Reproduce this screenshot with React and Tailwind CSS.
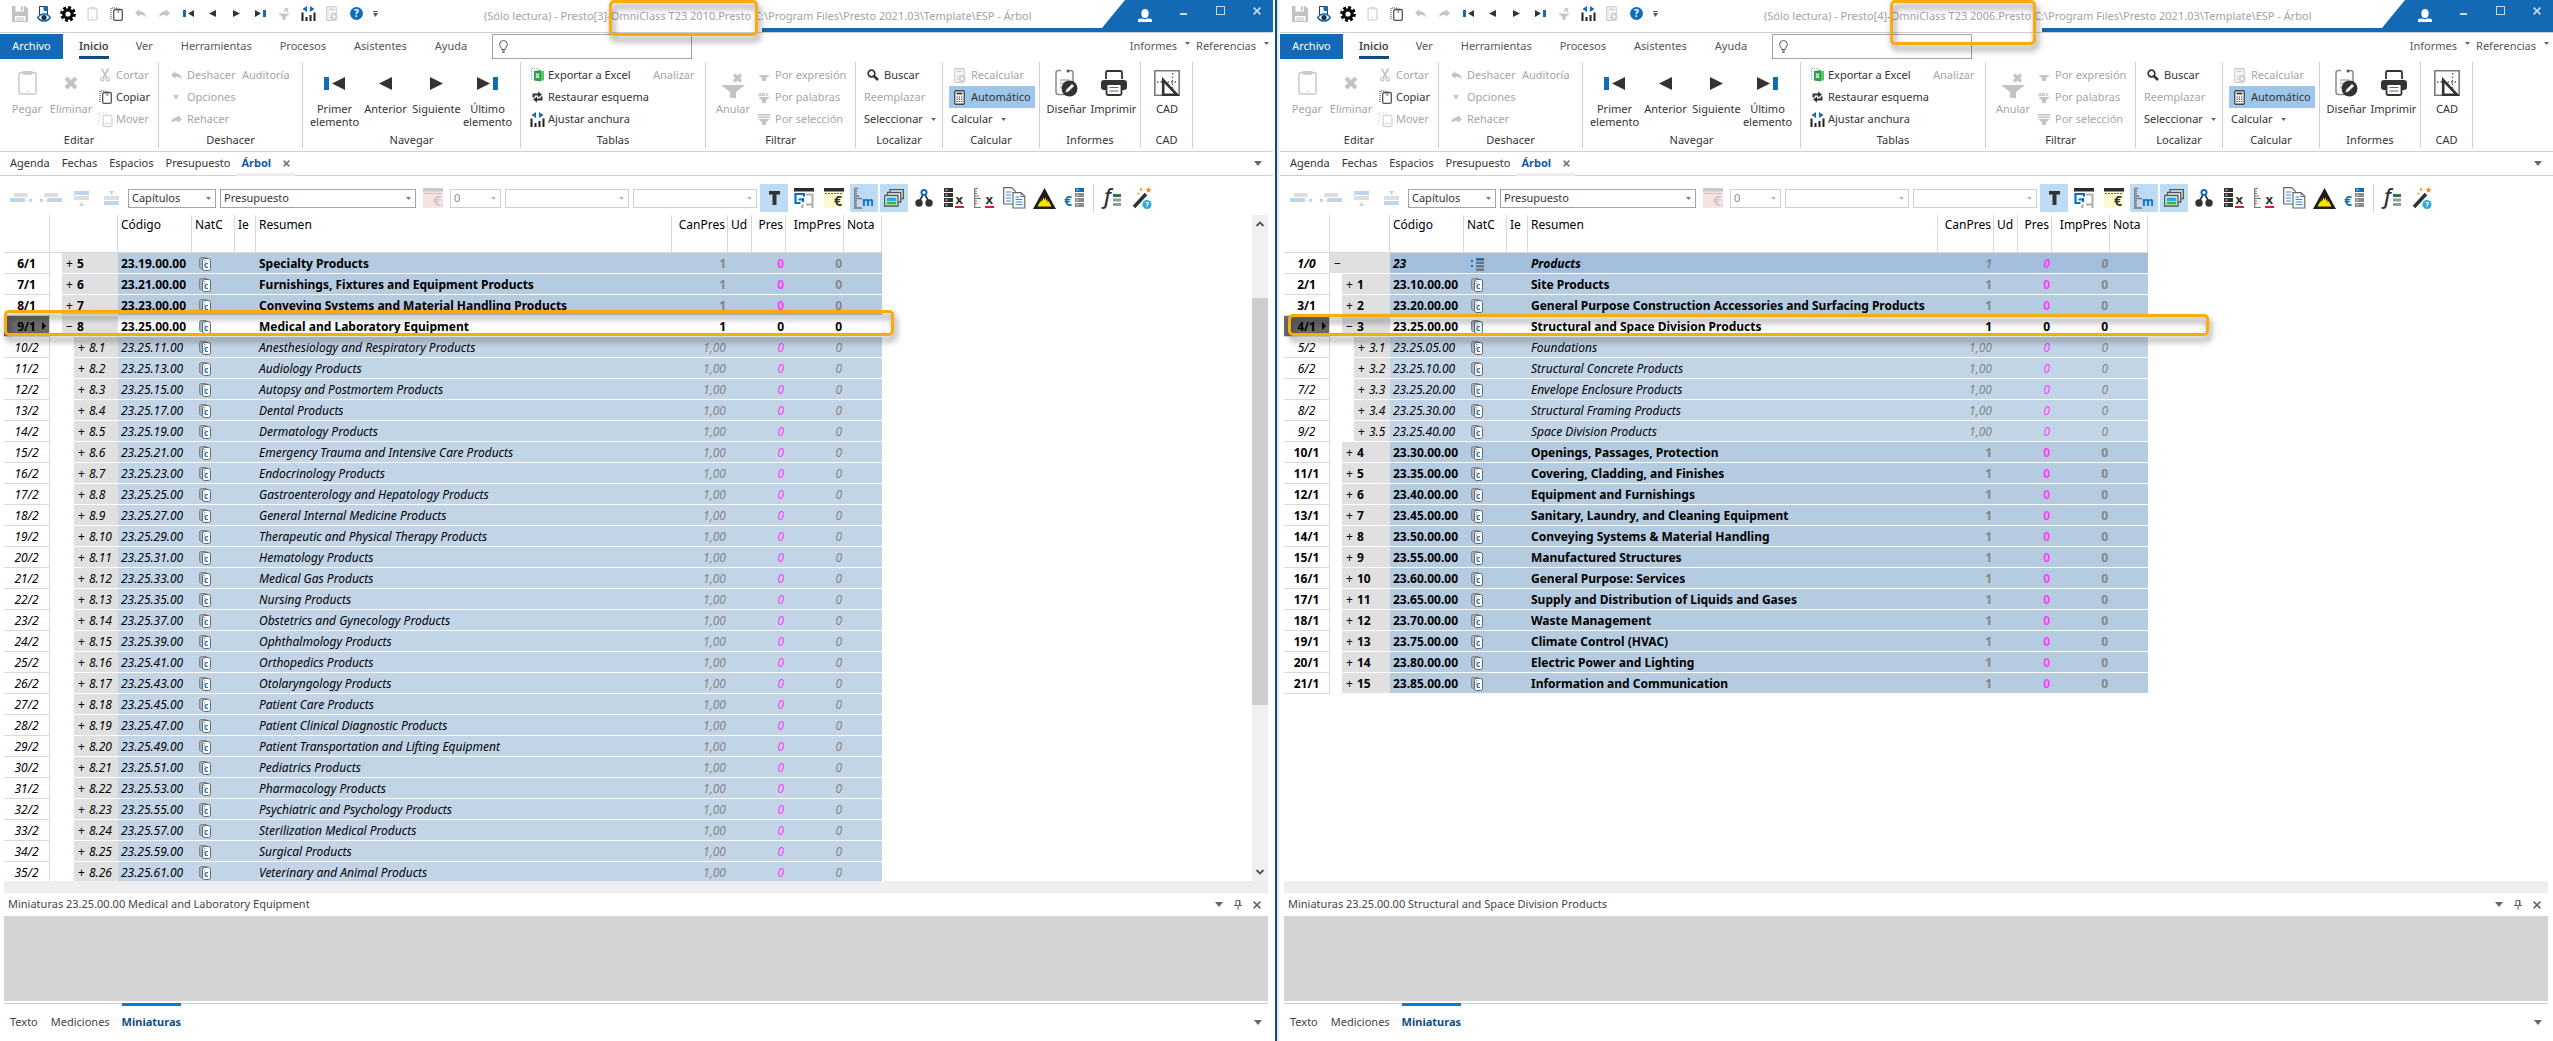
import clsx from "clsx";

const leftRows = [
  ["6/1", 1, "+", "5", "23.19.00.00", "Specialty Products"],
  ["7/1", 1, "+", "6", "23.21.00.00", "Furnishings, Fixtures and Equipment Products"],
  ["8/1", 1, "+", "7", "23.23.00.00", "Conveying Systems and Material Handling Products"],
  ["9/1", 1, "−", "8", "23.25.00.00", "Medical and Laboratory Equipment"],
  ["10/2", 2, "+", "8.1", "23.25.11.00", "Anesthesiology and Respiratory Products"],
  ["11/2", 2, "+", "8.2", "23.25.13.00", "Audiology Products"],
  ["12/2", 2, "+", "8.3", "23.25.15.00", "Autopsy and Postmortem Products"],
  ["13/2", 2, "+", "8.4", "23.25.17.00", "Dental Products"],
  ["14/2", 2, "+", "8.5", "23.25.19.00", "Dermatology Products"],
  ["15/2", 2, "+", "8.6", "23.25.21.00", "Emergency Trauma and Intensive Care Products"],
  ["16/2", 2, "+", "8.7", "23.25.23.00", "Endocrinology Products"],
  ["17/2", 2, "+", "8.8", "23.25.25.00", "Gastroenterology and Hepatology Products"],
  ["18/2", 2, "+", "8.9", "23.25.27.00", "General Internal Medicine Products"],
  ["19/2", 2, "+", "8.10", "23.25.29.00", "Therapeutic and Physical Therapy Products"],
  ["20/2", 2, "+", "8.11", "23.25.31.00", "Hematology Products"],
  ["21/2", 2, "+", "8.12", "23.25.33.00", "Medical Gas Products"],
  ["22/2", 2, "+", "8.13", "23.25.35.00", "Nursing Products"],
  ["23/2", 2, "+", "8.14", "23.25.37.00", "Obstetrics and Gynecology Products"],
  ["24/2", 2, "+", "8.15", "23.25.39.00", "Ophthalmology Products"],
  ["25/2", 2, "+", "8.16", "23.25.41.00", "Orthopedics Products"],
  ["26/2", 2, "+", "8.17", "23.25.43.00", "Otolaryngology Products"],
  ["27/2", 2, "+", "8.18", "23.25.45.00", "Patient Care Products"],
  ["28/2", 2, "+", "8.19", "23.25.47.00", "Patient Clinical Diagnostic Products"],
  ["29/2", 2, "+", "8.20", "23.25.49.00", "Patient Transportation and Lifting Equipment"],
  ["30/2", 2, "+", "8.21", "23.25.51.00", "Pediatrics Products"],
  ["31/2", 2, "+", "8.22", "23.25.53.00", "Pharmacology Products"],
  ["32/2", 2, "+", "8.23", "23.25.55.00", "Psychiatric and Psychology Products"],
  ["33/2", 2, "+", "8.24", "23.25.57.00", "Sterilization Medical Products"],
  ["34/2", 2, "+", "8.25", "23.25.59.00", "Surgical Products"],
  ["35/2", 2, "+", "8.26", "23.25.61.00", "Veterinary and Animal Products"],
];

const rightRows = [
  ["1/0", 0, "−", "", "23", "Products"],
  ["2/1", 1, "+", "1", "23.10.00.00", "Site Products"],
  ["3/1", 1, "+", "2", "23.20.00.00", "General Purpose Construction Accessories and Surfacing Products"],
  ["4/1", 1, "−", "3", "23.25.00.00", "Structural and Space Division Products"],
  ["5/2", 2, "+", "3.1", "23.25.05.00", "Foundations"],
  ["6/2", 2, "+", "3.2", "23.25.10.00", "Structural Concrete Products"],
  ["7/2", 2, "+", "3.3", "23.25.20.00", "Envelope Enclosure Products"],
  ["8/2", 2, "+", "3.4", "23.25.30.00", "Structural Framing Products"],
  ["9/2", 2, "+", "3.5", "23.25.40.00", "Space Division Products"],
  ["10/1", 1, "+", "4", "23.30.00.00", "Openings, Passages, Protection"],
  ["11/1", 1, "+", "5", "23.35.00.00", "Covering, Cladding, and Finishes"],
  ["12/1", 1, "+", "6", "23.40.00.00", "Equipment and Furnishings"],
  ["13/1", 1, "+", "7", "23.45.00.00", "Sanitary, Laundry, and Cleaning Equipment"],
  ["14/1", 1, "+", "8", "23.50.00.00", "Conveying Systems & Material Handling"],
  ["15/1", 1, "+", "9", "23.55.00.00", "Manufactured Structures"],
  ["16/1", 1, "+", "10", "23.60.00.00", "General Purpose: Services"],
  ["17/1", 1, "+", "11", "23.65.00.00", "Supply and Distribution of Liquids and Gases"],
  ["18/1", 1, "+", "12", "23.70.00.00", "Waste Management"],
  ["19/1", 1, "+", "13", "23.75.00.00", "Climate Control (HVAC)"],
  ["20/1", 1, "+", "14", "23.80.00.00", "Electric Power and Lighting"],
  ["21/1", 1, "+", "15", "23.85.00.00", "Information and Communication"],
];

const windows = [
  {
    id: "t2010",
    title: "(Sólo lectura) - Presto[3]-OmniClass T23 2010.Presto C:\\Program Files\\Presto 2021.03\\Template\\ESP - Árbol",
    rows: leftRows,
    selected: "9/1",
    treeCol: "w-[68px]",
    nameCol: "w-[416px]",
    scrollbar: true,
    thumbnails: "Miniaturas 23.25.00.00 Medical and Laboratory Equipment",
    marks: ["left-[609px] top-0 w-[149px] h-9", "left-1 top-[310px] w-[890px] h-[26px]"],
  },
  {
    id: "t2006",
    title: "(Sólo lectura) - Presto[4]-OmniClass T23 2006.Presto C:\\Program Files\\Presto 2021.03\\Template\\ESP - Árbol",
    rows: rightRows,
    selected: "4/1",
    treeCol: "w-[60px]",
    nameCol: "w-[410px]",
    scrollbar: false,
    thumbnails: "Miniaturas 23.25.00.00 Structural and Space Division Products",
    marks: ["left-[610px] top-0 w-[146px] h-[45px]", "left-2 top-[314px] w-[921px] h-[22px]"],
  },
];

/* ---------- icons ---------- */

function Svg({ w, h, children }) {
  return (
    <svg width={w} height={h} viewBox={`0 0 ${w} ${h}`} className="block shrink-0 overflow-visible" aria-hidden="true">
      {children}
    </svg>
  );
}

function Glyph({ x, y, size, fill = "#333", children, italic, weight = "700" }) {
  return (
    <text x={x} y={y} fontSize={size} fill={fill} fontWeight={weight} fontStyle={italic ? "italic" : "normal"} fontFamily='"Noto Sans", sans-serif'>
      {children}
    </text>
  );
}

const Caret = ({ color = "#666", w = 5, h = 3 }) => (
  <Svg w={w} h={h}>
    <path d={`M0 0h${w}L${w / 2} ${h}z`} fill={color} />
  </Svg>
);

const SaveIcon = () => (
  <Svg w={16} h={16}>
    <path d="M0 0h13l3 3v13H0z" fill="#c2c2c2" />
    <path d="M3.500 0h8.500v5.500H3.500zM3 10h10.500v5H3z" fill="#fff" />
    <path d="M9 .5h2v4H9zM4.500 11.500h7.500v1H4.500zM4.500 13.500h7.500v1H4.500z" fill="#c2c2c2" />
  </Svg>
);

const PreviewIcon = () => (
  <Svg w={14} h={16}>
    <path d="M2.500.5h8v8h-8z" fill="#fff" stroke="#333" />
    <path d="M6 0h5v5H7z" fill="#1469b4" />
    <path d="M.8 11.500c3-4.700 9.400-4.700 12.400 0-3 4.700-9.400 4.700-12.400 0z" fill="#fff" stroke="#1469b4" strokeWidth="1.600" />
    <circle cx="7" cy="11.500" r="2.600" fill="#1b2f4d" />
  </Svg>
);

const GearIcon = () => (
  <Svg w={16} h={16}>
    <circle cx="8" cy="8" r="4.200" fill="none" stroke="#000" strokeWidth="3.200" />
    <circle cx="8" cy="8" r="6.600" fill="none" stroke="#000" strokeWidth="2.600" strokeDasharray="2.900 2.280" />
  </Svg>
);

const ClipboardIcon = ({ color = "#c9c9c9", w = 11, h = 14 }) => (
  <Svg w={w} h={h}>
    <rect x="1" y="1.500" width={w - 2} height={h - 2.500} rx="2" fill="#fff" stroke={color} strokeWidth="1.500" />
    <path d={`M${w / 4} 0h${w / 2}v${w / 5}h-${w / 2}z`} fill={color} />
    <path d={`M${w / 2 - 1} ${h - 4}h2v1h-2z`} fill={color} />
  </Svg>
);

const CopyIcon = ({ color = "#555", accent = "#2fa84f" }) => (
  <Svg w={13} h={14}>
    <path d="M1 12V1h7" fill="none" stroke={color} strokeWidth="1.200" strokeDasharray="1 1" />
    <rect x="3.700" y="2.500" width="8.600" height="10.800" rx="1.200" fill="#fff" stroke={color} strokeWidth="1.300" />
    <path d="M6 1.800h4v1.600H6z" fill={color} />
    <path d="M7.500 4.300H9v1.400H7.500z" fill={accent} />
  </Svg>
);

const MoveIcon = () => (
  <Svg w={15} h={15}>
    <path d="M1 13V1h8v2" fill="none" stroke="#d5d5d5" strokeWidth="1.200" strokeDasharray="1 1" />
    <rect x="5" y="3.500" width="9" height="11" rx="1.200" fill="#fff" stroke="#d5d5d5" strokeWidth="1.300" />
    <path d="M7 11h1v1H7zM9 11h1v1H9zM11 11h1v1h-1z" fill="#c8c8c8" />
  </Svg>
);

const UndoIcon = ({ flip }) => (
  <Svg w={11} h={9}>
    <g transform={flip ? "translate(11 0) scale(-1 1)" : undefined}>
      <path d="M0 4 4.500 0v2.300C8 2.300 10.500 4 10.800 8.500 9.500 6.300 7.500 5.700 4.500 5.700V8z" fill="#c4c4c4" />
    </g>
  </Svg>
);

/* arrow pointing left, optionally with the blue bar that marks first/last */
const NavArrow = ({ big, bar, flip }) => {
  const w = bar ? (big ? 21 : 11) : big ? 13 : 7;
  const h = big ? 13 : 7;
  const b = big ? 5 : 3;
  const s = bar ? b + (big ? 3 : 2) : 0;
  return (
    <Svg w={w} h={h}>
      <g transform={flip ? `translate(${w} 0) scale(-1 1)` : undefined}>
        {bar && <path d={`M0 0h${b}v${h}H0z`} fill="#0f6db8" />}
        <path d={`M${w} 0v${h}L${s} ${h / 2}z`} fill="#333" />
      </g>
    </Svg>
  );
};

const FunnelIcon = ({ kind }) => (
  <Svg w={12} h={12}>
    {kind === "words" && <Glyph x={0} y={5} size={6} fill="#bbb">abc</Glyph>}
    {kind === "pick" && <path d="M0 1h12v1.500H0zM0 3.500h12V5H0z" fill="#c4c4c4" />}
    <path d="M0 6h12L8 9.300V12H4V9.300z" fill="#c4c4c4" />
  </Svg>
);

const FunnelClearIcon = ({ small }) => (
  <svg width={small ? 12 : 24} height={small ? 14 : 26} viewBox="0 0 24 26" className={clsx("block shrink-0", !small && "mt-1.5")} aria-hidden="true">
    <path d="m13 1.500 7 7m0-7-7 7" stroke="#c4c4c4" strokeWidth="3.200" />
    <path d="M0 12h24l-9 7v6H9v-6z" fill="#c4c4c4" />
  </svg>
);

const ColumnsIcon = () => (
  <Svg w={15} h={15}>
    <path d="M6 0v6L1.500 3zM9 0v6l4.500-3z" fill="#0f6db8" />
    <path d="M1.500 6.500V15M13.500 6.500V15" stroke="#222" strokeWidth="2" />
    <path d="M5.500 11v4M9.500 9v6" stroke="#222" strokeWidth="2" />
  </Svg>
);

const CalculatorIcon = ({ off, play }) => (
  <Svg w={12} h={15}>
    <rect x=".75" y=".75" width="9.500" height="13.500" rx="1" fill="#fff" stroke={off ? "#cfcfcf" : "#444"} strokeWidth="1.300" />
    <path d="M2.500 3.500h6" stroke={off ? "#cfcfcf" : "#333"} strokeWidth="1.800" />
    <path d="M2.500 7h6M2.500 9.200h6M2.500 11.500h6" stroke={off ? "#cfcfcf" : "#444"} strokeWidth="1.200" strokeDasharray="1.300 1" />
    {play && (
      <>
        <circle cx="8" cy="10.500" r="3.800" fill="#d3d3d3" />
        <path d="m7 8.800 3 1.700-3 1.700z" fill="#fff" />
      </>
    )}
  </Svg>
);

const HelpIcon = () => (
  <Svg w={13} h={13}>
    <circle cx="6.500" cy="6.500" r="6.500" fill="#0f6db8" />
    <Glyph x={4.100} y={10.200} size={10} fill="#fff">?</Glyph>
  </Svg>
);

const CrossIcon = () => (
  <Svg w={14} h={14}>
    <path d="m2 2 10 10M12 2 2 12" stroke="#c4c4c4" strokeWidth="4.200" />
  </Svg>
);

const ScissorsIcon = () => (
  <Svg w={10} h={14}>
    <path d="M1.500.5 7 10M8.500.5 3 10" stroke="#c4c4c4" strokeWidth="1.600" />
    <circle cx="2.300" cy="11.200" r="1.700" fill="none" stroke="#c4c4c4" strokeWidth="1.200" />
    <circle cx="7.700" cy="11.200" r="1.700" fill="none" stroke="#c4c4c4" strokeWidth="1.200" />
  </Svg>
);

const ExcelIcon = () => (
  <Svg w={13} h={14}>
    <path d="M.6 12V.6h8" fill="none" stroke="#999" strokeDasharray="1 1" />
    <path d="M3 3l7-1v11.500L3 12.500z" fill="#2aa148" />
    <path d="M10 3h3v9.500h-3z" fill="#5bc46c" />
    <path d="m5 5.500 3 4.500m0-4.500L5 10" stroke="#fff" strokeWidth="1.300" />
  </Svg>
);

const RestoreIcon = () => (
  <Svg w={11} h={12}>
    <path d="M1.500 6.500V3.500h6M9.500 5.500v3h-6" fill="none" stroke="#333" strokeWidth="2" />
    <path d="M6 .5 10 3.500 6 6.500zM5 5.500 1 8.500l4 3z" fill="#333" />
  </Svg>
);

const SearchIcon = () => (
  <Svg w={12} h={12}>
    <circle cx="4.500" cy="4.500" r="3.300" fill="none" stroke="#333" strokeWidth="1.700" />
    <path d="m7 7 4 4" stroke="#333" strokeWidth="2.500" />
  </Svg>
);

const DesignIcon = () => (
  <Svg w={23} h={28}>
    <rect x="1" y="1.500" width="17" height="24" rx="2.500" fill="#fff" stroke="#8a8a8a" strokeWidth="1.500" />
    <path d="M6 0h8v3H6z" fill="#fff" />
    <circle cx="13" cy="2" r="1.500" fill="#0a7a3c" />
    <path d="M5 11h9M5 14.500h6M5 18h3" stroke="#b5b5b5" strokeWidth="1.300" />
    <circle cx="14.500" cy="19.500" r="8" fill="#333" />
    <path d="m10.500 23.500 1-3 5.500-5.500 2 2-5.500 5.500z" fill="#fff" />
  </Svg>
);

const PrintIcon = () => (
  <Svg w={26} h={26}>
    <path d="M5 9V2.500C5 1.700 5.700 1 6.500 1h13c.8 0 1.500.7 1.500 1.500V9" fill="#fff" stroke="#333" strokeWidth="1.800" />
    <rect x="0" y="10" width="26" height="10" rx="3" fill="#333" />
    <rect x="5.500" y="14" width="15" height="11" rx="1.500" fill="#fff" stroke="#333" strokeWidth="1.800" />
    <path d="M8.500 17.500h9M8.500 21h9" stroke="#666" strokeWidth="1.200" />
  </Svg>
);

const CadIcon = () => (
  <Svg w={26} h={26}>
    <path d="M.8.800h24.400v24.400H.8z" fill="#fff" stroke="#7a7a7a" strokeWidth="1.600" />
    <path d="M3 12h20M18.500 3v16" stroke="#555" strokeWidth="1.300" strokeDasharray="1.500 2" />
    <path d="M9.200 10v14.800H23z" fill="#fff" stroke="#333" strokeWidth="2.600" />
  </Svg>
);

const BulbIcon = () => (
  <Svg w={9} h={13}>
    <path d="M2.800 9.500C2.800 7.500.7 7 .7 4.300a3.800 3.800 0 0 1 7.600 0C8.300 7 6.200 7.500 6.200 9.500z" fill="none" stroke="#555" />
    <path d="M3 11h3M3.500 12.500h2" stroke="#555" />
  </Svg>
);

const UserIcon = () => (
  <Svg w={14} h={14}>
    <ellipse cx="7" cy="4.500" rx="3.600" ry="4.500" fill="#fff" />
    <path d="M0 13v-2.500C1.500 9.200 4 9 7 10.200 10 9 12.500 9.200 14 10.500V13z" fill="#fff" />
  </Svg>
);

const RowMoveIcon = ({ kind }) => {
  const gray = "#dedede";
  const blue = "#bcd6ea";
  if (kind === "up" || kind === "down") {
    const up = kind === "up";
    return (
      <Svg w={15} h={15}>
        <path d={up ? "M0 0h15v4H0z" : "M0 5h15v4H0z"} fill={up ? blue : gray} />
        <path d={up ? "M0 5h15v4H0z" : "M0 10h15v4H0z"} fill={up ? gray : blue} />
        <path d={up ? "m7.500 11 2.500 4H5z" : "M5 0h5L7.500 4z"} fill={blue} />
      </Svg>
    );
  }
  const left = kind === "left";
  return (
    <Svg w={22} h={10}>
      <path d="M4 0h14v4H4z" fill={gray} />
      <path d={left ? "M0 5h15v4H0z" : "M7 5h15v4H7z"} fill={blue} />
      <path d={left ? "M22 5v4.500L18 7.200z" : "M0 5v4.500L4 7.200z"} fill={blue} />
    </Svg>
  );
};

const PriceIcon = ({ off }) => (
  <Svg w={20} h={20}>
    <path d="M0 0h20v20H0z" fill={off ? "#f7e1e3" : "#fdfad0"} />
    <path d="M0 0h20v3.500H0z" fill={off ? "#c9c9c9" : "#2d2d2d"} />
    <path d="M1 5.500h18" stroke={off ? "#bbb" : "#666"} strokeDasharray="2 1" />
    <Glyph x={10} y={18} size={14} fill={off ? "#c9c9c9" : "#333"}>€</Glyph>
  </Svg>
);

const PlanIcon = () => (
  <Svg w={20} h={21}>
    <path d="M0 0h20v3.500H0z" fill="#2d2d2d" />
    <path d="M12 6.500h6.500v13.500M8.500 20v-3.500M12 16.500h6" fill="none" stroke="#b0b0b0" strokeWidth="2.200" />
    <path d="M11 6H1.500v9h5M10 5v3.500M4.500 11.500h5M9 10v4" fill="none" stroke="#0f6db8" strokeWidth="2.200" />
  </Svg>
);

const MeasureIcon = () => (
  <Svg w={20} h={21}>
    <path d="M1 .5h3M1 3h2M1 5.500h2M1 8h4M1 10.500h7M1 13h2M1 15.500h2M1 18h2M1 20h7" stroke="#777" strokeWidth="1.300" />
    <path d="M.7 0v21" stroke="#777" />
    <Glyph x={8} y={18} size={12} fill="#0f6db8">m</Glyph>
  </Svg>
);

const StackIcon = () => (
  <Svg w={20} h={18}>
    <path d="M6 .700h13.300v9H6z" fill="#dff0fb" stroke="#555" strokeWidth="1.300" />
    <path d="M3.500 3.500h13.300v9.500H3.500z" fill="#dff0fb" stroke="#555" strokeWidth="1.300" />
    <path d="M.7 6.500H14V17H.7z" fill="#fff" stroke="#555" strokeWidth="1.300" />
    <path d="M2.500 8.500h10V12h-10z" fill="#2aa9e0" />
    <path d="M2.500 12.500h10v3h-10z" fill="#37b34a" />
  </Svg>
);

const TreeNodesIcon = () => (
  <Svg w={18} h={18}>
    <path d="M4 13 9 4l5 9" fill="none" stroke="#333" strokeWidth="1.600" />
    <circle cx="9" cy="3.500" r="2.500" fill="#fff" stroke="#0f6db8" strokeWidth="2" />
    <circle cx="4" cy="14" r="3.700" fill="#333" />
    <circle cx="14" cy="14" r="3.700" fill="#333" />
  </Svg>
);

const ListRemoveIcon = ({ ruler }) => (
  <Svg w={20} h={20}>
    {ruler ? (
      <path d="M.7 0v20M1 .5h3M1 3h2M1 5.500h2M1 8h4M1 10.500h6M1 13h2M1 15.500h2M1 19.500h6" stroke="#777" strokeWidth="1.200" fill="none" />
    ) : (
      <>
        <path d="M0 0h9v4H0zM0 5h9v4H0zM0 10h9v4H0zM0 15h9v4H0z" fill="#333" />
        <path d="M1.500 2h2M1.500 7h2M1.500 12h2M1.500 17h2" stroke="#fff" />
      </>
    )}
    <Glyph x={11.500} y={15.500} size={13}>x</Glyph>
    <path d="M11 18h9v2h-9z" fill="#d81e36" />
  </Svg>
);

const CopyDocsIcon = () => (
  <Svg w={23} h={22}>
    <path d="M.7.700h8l3.500 3.500V17H.7z" fill="#fff" stroke="#666" strokeWidth="1.200" />
    <path d="M3 5h5M3 8h5M3 11h5M3 14h5" stroke="#3d85c6" />
    <path d="M10 5.700h8l3.800 3.500V21H10z" fill="#fff" stroke="#666" strokeWidth="1.200" />
    <path d="M18 5.700v3.800h3.800M12.500 10h4M12.500 12.500h7M12.500 15h7M12.500 17.500h7" fill="none" stroke="#3d85c6" />
  </Svg>
);

const WarningIcon = () => (
  <Svg w={23} h={21}>
    <path d="M11.500 0 23 21H0z" fill="#1d1d1b" />
    <path d="M4.500 18.500 7.500 13l1 1.500V11l1.500 2V9l1.500 3L13 9v4l1.500-2v3.500l1-1.500 3 5.500z" fill="#ffe600" />
  </Svg>
);

const EuroListIcon = () => (
  <Svg w={20} h={20}>
    <Glyph x={0} y={18} size={14} fill="#0f6db8">€</Glyph>
    <path d="M11 0h9v4h-9z" fill="#0f6db8" />
    <path d="M11 5h9v4h-9zM11 10h9v4h-9zM11 15h9v4h-9z" fill="#8a8a8a" />
    <path d="M12.500 2h2M12.500 7h2M12.500 12h2M12.500 17h2" stroke="#fff" />
  </Svg>
);

const FunctionIcon = () => (
  <Svg w={18} h={20}>
    <Glyph x={1} y={16} size={21} italic weight="500">f</Glyph>
    <path d="M10 6h8v3h-8z" fill="#217a4b" />
    <path d="M10 10.500h8v3h-8zM10 15h8v3h-8z" fill="#9a9a9a" />
  </Svg>
);

const WandIcon = () => (
  <Svg w={20} h={22}>
    <path d="m2 20 12-13" stroke="#333" strokeWidth="3.500" />
    <path d="m16.500 0 .9 2h2.100l-1.600 1.500.7 2.200-2.100-1.200-2 1.200.7-2.200L13.500 2h2zM9 .5l.5 1.200h1.300l-1 .9.400 1.400L9 3.300 7.800 4l.4-1.400-1-.9h1.300zM6.500 5l.4 1 1.100.1-.8.700.2 1.100-.9-.6-1 .6.300-1.100-.8-.7 1.100-.1z" fill="#f28c1e" />
    <circle cx="15" cy="17.500" r="4.500" fill="#2aa9e0" />
    <Glyph x={13.200} y={20.300} size={7.500} fill="#fff">?</Glyph>
  </Svg>
);

const TextIcon = () => (
  <Svg w={11} h={14}>
    <path d="M0 0h11v3.500H7.500V14h-4V3.500H0z" fill="#333" />
  </Svg>
);

const NatureIcon = ({ root }) =>
  root ? (
    <Svg w={13} h={13}>
      <path d="M0 2h2v2H0zM0 7h2v2H0z" fill="#0f6db8" />
      <path d="M5 0h8v2.500H5z" fill="#2469a8" />
      <path d="M5 3.500h8v2.500H5zM5 7h8v2.500H5zM5 10.500h8V13H5z" fill="#6b7683" />
    </Svg>
  ) : (
    <Svg w={12} h={14}>
      <rect x=".5" y=".5" width="8" height="11" rx="2" fill="#a9b1b9" stroke="#7c858d" />
      <rect x="3.500" y="1.500" width="8" height="12" rx="2" fill="#fff" stroke="#5f676f" />
      <path d="M5 3.500h1.500M5 5.500h1" stroke="#888" strokeWidth=".8" />
      <Glyph x={5} y={11} size={8} fill="#0f6db8">c</Glyph>
    </Svg>
  );

const PinIcon = () => (
  <Svg w={8} h={10}>
    <path d="M2 5.500V.5h4v5M0 5.500h8M4 6v4" fill="none" stroke="#666" />
    <path d="M5.500 1v4" stroke="#666" />
  </Svg>
);

const SmallCross = ({ size = 8, color = "#666", width = 1.600 }) => (
  <Svg w={size} h={size}>
    <path d={`M.6.600 ${size - 0.6} ${size - 0.6}M${size - 0.6}.600.600 ${size - 0.6}`} stroke={color} strokeWidth={width} />
  </Svg>
);

/* ---------- title bar ---------- */

const quickTools = [
  ["Guardar", <SaveIcon />],
  ["Vista previa", <PreviewIcon />],
  ["Opciones", <GearIcon />],
  ["Pegar", <ClipboardIcon color="#d9d9d9" />],
  ["Copiar", <CopyIcon />],
  ["Deshacer", <UndoIcon />],
  ["Rehacer", <UndoIcon flip />],
  ["Primero", <NavArrow bar />],
  ["Anterior", <NavArrow />],
  ["Siguiente", <NavArrow flip />],
  ["Último", <NavArrow bar flip />],
  ["Anular filtro", <FunnelClearIcon small />],
  ["Ajustar anchura", <ColumnsIcon />],
  ["Recalcular", <CalculatorIcon off play />],
  ["Ayuda", <HelpIcon />],
];

function TitleBar({ title }) {
  return (
    <header className="relative flex h-[33px] shrink-0 justify-between border-b border-[#cfcfcf]">
      <div className="flex min-w-0">
        <div className="flex h-[27px] w-[484px] shrink-0 items-center pl-2">
          {quickTools.map(([name, icon]) => (
            <button key={name} aria-label={name} className="flex w-6 justify-center">
              {icon}
            </button>
          ))}
          <button aria-label="Personalizar" className="flex flex-col items-center gap-px pl-[5px]">
            <span className="h-px w-[5px] bg-[#555]" />
            <Caret color="#555" w={5} h={4} />
          </button>
        </div>
        <h1 className="h-8 truncate text-[11px] leading-8 text-[#a3a3a3]">{title}</h1>
      </div>
      <div className="absolute right-0 bottom-0 h-1 w-[511px] bg-[#1469b4]" />
      <div className="relative flex w-[171px] shrink-0 bg-[#1469b4] pl-9 [clip-path:polygon(23px_0,100%_0,100%_100%,0_100%,0_28px)]">
        <button aria-label="Usuario" className="flex h-8 w-4 items-center">
          <UserIcon />
        </button>
        <div className="flex h-[21px] items-center gap-6 pl-[26px]">
          <button aria-label="Minimizar" className="flex h-2 w-3 items-end">
            <span className="h-0.5 w-[7px] bg-[#c9dcee]" />
          </button>
          <button aria-label="Maximizar" className="h-[9px] w-[9px] border border-[#c9dcee]" />
          <button aria-label="Cerrar" className="ml-1">
            <SmallCross color="#c9dcee" />
          </button>
        </div>
      </div>
    </header>
  );
}

/* ---------- ribbon ---------- */

function RibbonTabs({ id }) {
  return (
    <nav className="flex h-[26px] shrink-0 pt-px text-[11px] text-[#555]">
      <a href="#archivo" className="flex w-[63px] items-center justify-center bg-[#1469b4] text-white">
        Archivo
      </a>
      <a href="#inicio" className="ml-4 flex items-center border-b-[3px] border-[#0f4c81] pt-[3px] font-semibold text-[#444]">
        Inicio
      </a>
      <div className="flex items-center gap-7 pl-[27px]">
        {["Ver", "Herramientas", "Procesos", "Asistentes", "Ayuda"].map((tab) => (
          <a key={tab} href={`#${tab.toLowerCase()}`}>
            {tab}
          </a>
        ))}
      </div>
      <label htmlFor={`${id}-help`} className="ml-[25px] flex w-[200px] items-center border border-[#a3a3a3] pl-1.5">
        <BulbIcon />
        <input id={`${id}-help`} aria-label="Buscar ayuda" className="min-w-0 flex-1 px-1 outline-none" />
      </label>
      <div className="ml-auto flex items-center gap-1.5 pr-1">
        {["Informes", "Referencias"].map((name) => (
          <button key={name} className="flex items-center gap-2">
            {name}
            <span className="pb-1.5">
              <Caret w={5} h={3} />
            </span>
          </button>
        ))}
      </div>
    </nav>
  );
}

function Group({ label, className, children }) {
  return (
    <section className={clsx("flex shrink-0 flex-col border-r border-[#d0d0d0]", className)}>
      <div className="flex h-[70px] pt-0.5">{children}</div>
      <h2 className="text-center leading-4">{label}</h2>
    </section>
  );
}

function BigButton({ icon, off, className = "w-11", children }) {
  return (
    <button disabled={off} className={clsx("flex shrink-0 flex-col items-center leading-[13px]", off && "text-[#a6a6a6]", className)}>
      <span className="flex h-[38px] items-center justify-center">{icon}</span>
      {children}
    </button>
  );
}

function SmallButton({ icon, off, active, caret, children }) {
  return (
    <button
      disabled={off}
      className={clsx(
        "flex h-[22px] items-center gap-0.5 pr-1 whitespace-nowrap",
        off && "text-[#a6a6a6]",
        active && "bg-[#9dc6ea]"
      )}
    >
      {icon && <span className="flex w-[18px] justify-center">{icon}</span>}
      {children}
      {caret && (
        <span className="pl-1.5">
          <Caret />
        </span>
      )}
    </button>
  );
}

function Ribbon() {
  return (
    <div className="flex h-[93px] shrink-0 border-b border-[#d0d0d0] py-[3px] text-[11px] text-[#333]">
      <Group label="Editar" className="w-[159px] [&>div]:pl-[5px]">
        <BigButton off icon={<ClipboardIcon w={19} h={24} />}>Pegar</BigButton>
        <BigButton off icon={<CrossIcon />}>Eliminar</BigButton>
        <div className="flex flex-col pl-[3px]">
          <SmallButton off icon={<ScissorsIcon />}>Cortar</SmallButton>
          <SmallButton icon={<CopyIcon />}>Copiar</SmallButton>
          <SmallButton off icon={<MoveIcon />}>Mover</SmallButton>
        </div>
      </Group>
      <Group label="Deshacer" className="w-36 [&>div]:pl-2">
        <div className="flex w-[75px] flex-col">
          <SmallButton off icon={<UndoIcon />}>Deshacer</SmallButton>
          <SmallButton off icon={<Caret color="#c4c4c4" w={6} h={5} />}>Opciones</SmallButton>
          <SmallButton off icon={<UndoIcon flip />}>Rehacer</SmallButton>
        </div>
        <div>
          <SmallButton off>Auditoría</SmallButton>
        </div>
      </Group>
      <Group label="Navegar" className="w-[218px] [&>div]:pl-1.5">
        <BigButton className="w-[51px]" icon={<NavArrow big bar />}>Primer<br />elemento</BigButton>
        <BigButton className="w-[51px]" icon={<NavArrow big />}>Anterior</BigButton>
        <BigButton className="w-[51px]" icon={<NavArrow big flip />}>Siguiente</BigButton>
        <BigButton className="w-[51px]" icon={<NavArrow big bar flip />}>Último<br />elemento</BigButton>
      </Group>
      <Group label="Tablas" className="w-[185px] [&>div]:pl-[7px]">
        <div className="flex w-[125px] flex-col">
          <SmallButton icon={<ExcelIcon />}>Exportar a Excel</SmallButton>
          <SmallButton icon={<RestoreIcon />}>Restaurar esquema</SmallButton>
          <SmallButton icon={<ColumnsIcon />}>Ajustar anchura</SmallButton>
        </div>
        <div>
          <SmallButton off>Analizar</SmallButton>
        </div>
      </Group>
      <Group label="Filtrar" className="w-[150px] [&>div]:pl-[5px]">
        <BigButton off icon={<FunnelClearIcon />}>Anular</BigButton>
        <div className="flex flex-col">
          <SmallButton off icon={<FunnelIcon />}>Por expresión</SmallButton>
          <SmallButton off icon={<FunnelIcon kind="words" />}>Por palabras</SmallButton>
          <SmallButton off icon={<FunnelIcon kind="pick" />}>Por selección</SmallButton>
        </div>
      </Group>
      <Group label="Localizar" className="w-[87px] [&>div]:pl-2">
        <div className="flex flex-col">
          <SmallButton icon={<SearchIcon />}>Buscar</SmallButton>
          <SmallButton off>Reemplazar</SmallButton>
          <SmallButton caret>Seleccionar</SmallButton>
        </div>
      </Group>
      <Group label="Calcular" className="w-[97px] [&>div]:px-1.5">
        <div className="flex flex-1 flex-col [&>button]:pl-0.5">
          <SmallButton off icon={<CalculatorIcon off play />}>Recalcular</SmallButton>
          <SmallButton active icon={<CalculatorIcon />}>Automático</SmallButton>
          <SmallButton caret>Calcular</SmallButton>
        </div>
      </Group>
      <Group label="Informes" className="w-[101px] [&>div]:pl-[3px]">
        <BigButton className="w-[47px]" icon={<DesignIcon />}>Diseñar</BigButton>
        <BigButton className="w-[47px]" icon={<PrintIcon />}>Imprimir</BigButton>
      </Group>
      <Group label="CAD" className="w-[52px] [&>div]:pl-1">
        <BigButton icon={<CadIcon />}>CAD</BigButton>
      </Group>
    </div>
  );
}

/* ---------- document tabs and toolbar ---------- */

function DocumentTabs() {
  return (
    <nav className="flex h-6 shrink-0 border-b border-[#d0d0d0] pl-2.5 text-[11px] text-[#333]">
      <div className="flex items-center gap-3 pb-px">
        {["Agenda", "Fechas", "Espacios", "Presupuesto"].map((tab) => (
          <a key={tab} href={`#${tab.toLowerCase()}`}>
            {tab}
          </a>
        ))}
      </div>
      <div className="-mb-px ml-1.5 flex items-center gap-3 border-b-[3px] border-[#ececec] px-[5px] pt-0.5">
        <a href="#arbol" className="font-bold text-[#0f5a9c]">Árbol</a>
        <button aria-label="Cerrar pestaña">
          <SmallCross size={7} color="#777" />
        </button>
      </div>
      <button aria-label="Más pestañas" className="ml-auto pr-[11px]">
        <Caret w={8} h={5} />
      </button>
    </nav>
  );
}

function Combo({ id, label, value, off, className }) {
  return (
    <label htmlFor={id} className={clsx("relative flex h-[19px] shrink-0 items-center border", off ? "border-[#cfcfcf]" : "border-[#a3a3a3]", className)}>
      <select
        id={id}
        aria-label={label}
        disabled={off}
        defaultValue={value}
        className={clsx("h-full w-full appearance-none bg-transparent pl-[3px] text-[11px] outline-none", off ? "text-[#8a8a8a]" : "text-[#333]")}
      >
        <option>{value}</option>
      </select>
      <span className="pointer-events-none absolute right-1">
        <Caret color={off ? "#bbb" : "#777"} />
      </span>
    </label>
  );
}

const viewTools = [
  ["Texto", <TextIcon />, true],
  ["Plano", <PlanIcon />],
  ["Precio", <PriceIcon />],
  ["Medición", <MeasureIcon />, true],
  ["Niveles", <StackIcon />, true],
  ["Relaciones", <TreeNodesIcon />],
  ["Quitar conceptos", <ListRemoveIcon />],
  ["Quitar mediciones", <ListRemoveIcon ruler />],
  ["Copiar documentos", <CopyDocsIcon />],
  ["Avisos", <WarningIcon />],
  ["Precios", <EuroListIcon />],
];

function Toolbar({ id }) {
  return (
    <div className="flex h-[39px] shrink-0 items-center pt-2 pb-[3px] pl-1.5">
      {["left", "right", "up", "down"].map((kind) => (
        <button key={kind} aria-label={`Mover ${kind}`} disabled className="flex w-[30px] shrink-0 justify-center">
          <RowMoveIcon kind={kind} />
        </button>
      ))}
      <div className="ml-0.5 flex gap-1">
        <Combo id={`${id}-level`} label="Nivel" value="Capítulos" className="w-[88px]" />
        <Combo id={`${id}-structure`} label="Estructura" value="Presupuesto" className="w-[196px]" />
      </div>
      <span className="flex w-[34px] shrink-0 justify-center">
        <PriceIcon off />
      </span>
      <div className="flex gap-1">
        <Combo id={`${id}-date`} label="Fecha" value="0" off className="w-[51px]" />
        <Combo id={`${id}-space`} label="Espacio" value="" off className="w-[124px]" />
        <Combo id={`${id}-filter`} label="Filtro" value="" off className="w-[124px]" />
      </div>
      <div className="ml-[3px] flex items-center gap-0.5">
        {viewTools.map(([name, icon, active]) => (
          <button key={name} aria-label={name} className={clsx("flex size-7 shrink-0 items-center justify-center", active && "bg-[#bddcf4]")}>
            {icon}
          </button>
        ))}
        <span className="mr-0.5 ml-[3px] h-7 w-px bg-[#cfcfcf]" />
        <button aria-label="Funciones" className="flex size-7 items-center justify-center">
          <FunctionIcon />
        </button>
        <button aria-label="Asistente" className="flex size-7 items-center justify-center">
          <WandIcon />
        </button>
      </div>
    </div>
  );
}

/* ---------- concept tree ---------- */

const levelFill = ["bg-[#a3bedd]", "bg-[#b4cbe0]", "bg-[#c2d5e7]"];
const treePad = ["pl-0", "pl-3", "pl-6"];
const levelText = ["font-bold italic", "font-bold", "italic"];

function ConceptRow({ row, selected }) {
  const [num, level, sign, pos, code, name] = row;
  const fill = selected ? "bg-white" : levelFill[level];
  const muted = selected ? "text-black" : "text-[#858585]";
  const cell = clsx("border-b border-white pt-0.5 pr-0.5 pb-0 pl-[3px]", fill);

  return (
    <tr className={clsx("h-[21px] leading-[18px]", levelText[level])}>
      <td className={clsx("border-r border-b border-[#d9d9d9] p-0 pt-0.5 text-center", selected && "bg-[#696969]")}>
        <div className="relative">
          {num}
          {selected && (
            <span className="absolute top-1 right-[3px]">
              <Svg w={4} h={8}>
                <path d="M0 0v8l4-4z" fill="#000" />
              </Svg>
            </span>
          )}
        </div>
      </td>
      <td className={clsx("border-b border-white p-0", treePad[level])}>
        <div className="flex h-5 items-center bg-[#e0e0e0] pt-0.5 pl-[3px]">
          <button className="w-[9px] shrink-0 text-center font-normal not-italic">{sign}</button>
          <span className="pl-[3px]">{pos}</span>
        </div>
      </td>
      <td className={cell}>{code}</td>
      <td className={cell}>
        <span className="block pl-1">
          <NatureIcon root={level === 0} />
        </span>
      </td>
      <td className={cell} />
      <td className={cell}>{name}</td>
      <td className={clsx(cell, muted, "text-right")}>{level === 2 ? "1,00" : "1"}</td>
      <td className={cell} />
      <td className={clsx(cell, "text-right", selected ? "text-black" : "text-[#ff3dff]")}>0</td>
      <td className={clsx(cell, muted, "text-right")}>0</td>
      <td className={cell} />
    </tr>
  );
}

function ConceptTable({ view }) {
  const head = "border-r border-b border-[#d9d9d9] pt-px pr-0.5 pl-[3px] align-top font-normal";
  return (
    <table className="w-0 table-fixed border-separate border-spacing-0 text-[12px] whitespace-nowrap text-black">
      <colgroup>
        <col className="w-[46px]" />
        <col className={view.treeCol} />
        <col className="w-[74px]" />
        <col className="w-[43px]" />
        <col className="w-[21px]" />
        <col className={view.nameCol} />
        <col className="w-[56px]" />
        <col className="w-[24px]" />
        <col className="w-[34px]" />
        <col className="w-[58px]" />
        <col className="w-[38px]" />
      </colgroup>
      <thead>
        <tr className="h-[38px] text-left">
          <th className={head} />
          <th className={head} />
          <th className={head}>Código</th>
          <th className={head}>NatC</th>
          <th className={head}>Ie</th>
          <th className={head}>Resumen</th>
          <th className={clsx(head, "text-right")}>CanPres</th>
          <th className={head}>Ud</th>
          <th className={clsx(head, "text-right")}>Pres</th>
          <th className={clsx(head, "text-right")}>ImpPres</th>
          <th className={head}>Nota</th>
        </tr>
      </thead>
      <tbody>
        {view.rows.map((row) => (
          <ConceptRow key={row[0]} row={row} selected={row[0] === view.selected} />
        ))}
      </tbody>
    </table>
  );
}

function Scrollbar() {
  return (
    <div className="flex w-4 shrink-0 flex-col items-center bg-[#f0f0f0] py-1.5">
      <Svg w={8} h={6}>
        <path d="M.5 5 4 1.500 7.500 5" fill="none" stroke="#555" strokeWidth="1.800" />
      </Svg>
      <div className="mt-[71px] h-[407px] w-full bg-[#cdcdcd]" />
      <div className="mt-auto">
        <Svg w={8} h={6}>
          <path d="M.5 1 4 4.500 7.500 1" fill="none" stroke="#555" strokeWidth="1.800" />
        </Svg>
      </div>
    </div>
  );
}

/* ---------- lower pane ---------- */

function ThumbnailsPane({ title }) {
  return (
    <section className="shrink-0 text-[11px] text-[#444]">
      <div className="h-3 bg-[#eee]" />
      <div className="flex h-[23px] items-center justify-between pr-[7px] pl-1">
        <h2>{title}</h2>
        <div className="flex items-center gap-[11px]">
          <button aria-label="Menú"><Caret w={8} h={5} /></button>
          <button aria-label="Fijar"><PinIcon /></button>
          <button aria-label="Cerrar panel"><SmallCross /></button>
        </div>
      </div>
      <div className="h-[85px] bg-[#d4d4d4]" />
      <nav className="mt-0.5 flex h-[38px] border-t border-[#d0d0d0] pl-1.5">
        <div className="flex items-center gap-[13px] pr-3">
          <a href="#texto">Texto</a>
          <a href="#mediciones">Mediciones</a>
        </div>
        <a href="#miniaturas" className="-mt-px flex items-center border-t-[3px] border-[#1278cf] pb-0.5 font-bold text-[#0f4c81]">
          Miniaturas
        </a>
        <button aria-label="Más paneles" className="ml-auto pr-1.5">
          <Caret w={8} h={5} />
        </button>
      </nav>
    </section>
  );
}

function PrestoWindow({ view }) {
  return (
    <div className="relative flex min-w-0 flex-1 flex-col bg-white">
      <TitleBar title={view.title} />
      <RibbonTabs id={view.id} />
      <Ribbon />
      <DocumentTabs />
      <Toolbar id={view.id} />
      <div className="flex min-h-0 flex-1 flex-col pr-[5px] pl-1">
        <div className="flex min-h-0 flex-1">
          <div className="min-w-0 flex-1 overflow-hidden">
            <ConceptTable view={view} />
          </div>
          {view.scrollbar && <Scrollbar />}
        </div>
        <ThumbnailsPane title={view.thumbnails} />
      </div>
      {view.marks.map((box) => (
        <div
          key={box}
          className={clsx("pointer-events-none absolute rounded-[5px] border-[3px] border-[#fbab0b] drop-shadow-[2px_5px_3px_rgba(0,0,0,0.5)]", box)}
        />
      ))}
    </div>
  );
}

export default function App() {
  return (
    <main className="flex h-screen overflow-hidden bg-white font-['Noto_Sans',sans-serif]">
      <PrestoWindow view={windows[0]} />
      <div className="flex w-[7px] shrink-0 pl-0.5">
        <div className="w-0.5 bg-[#0f4c81]" />
        <div className="flex-1 bg-linear-to-r from-[#d5dfec] to-white" />
      </div>
      <PrestoWindow view={windows[1]} />
    </main>
  );
}
